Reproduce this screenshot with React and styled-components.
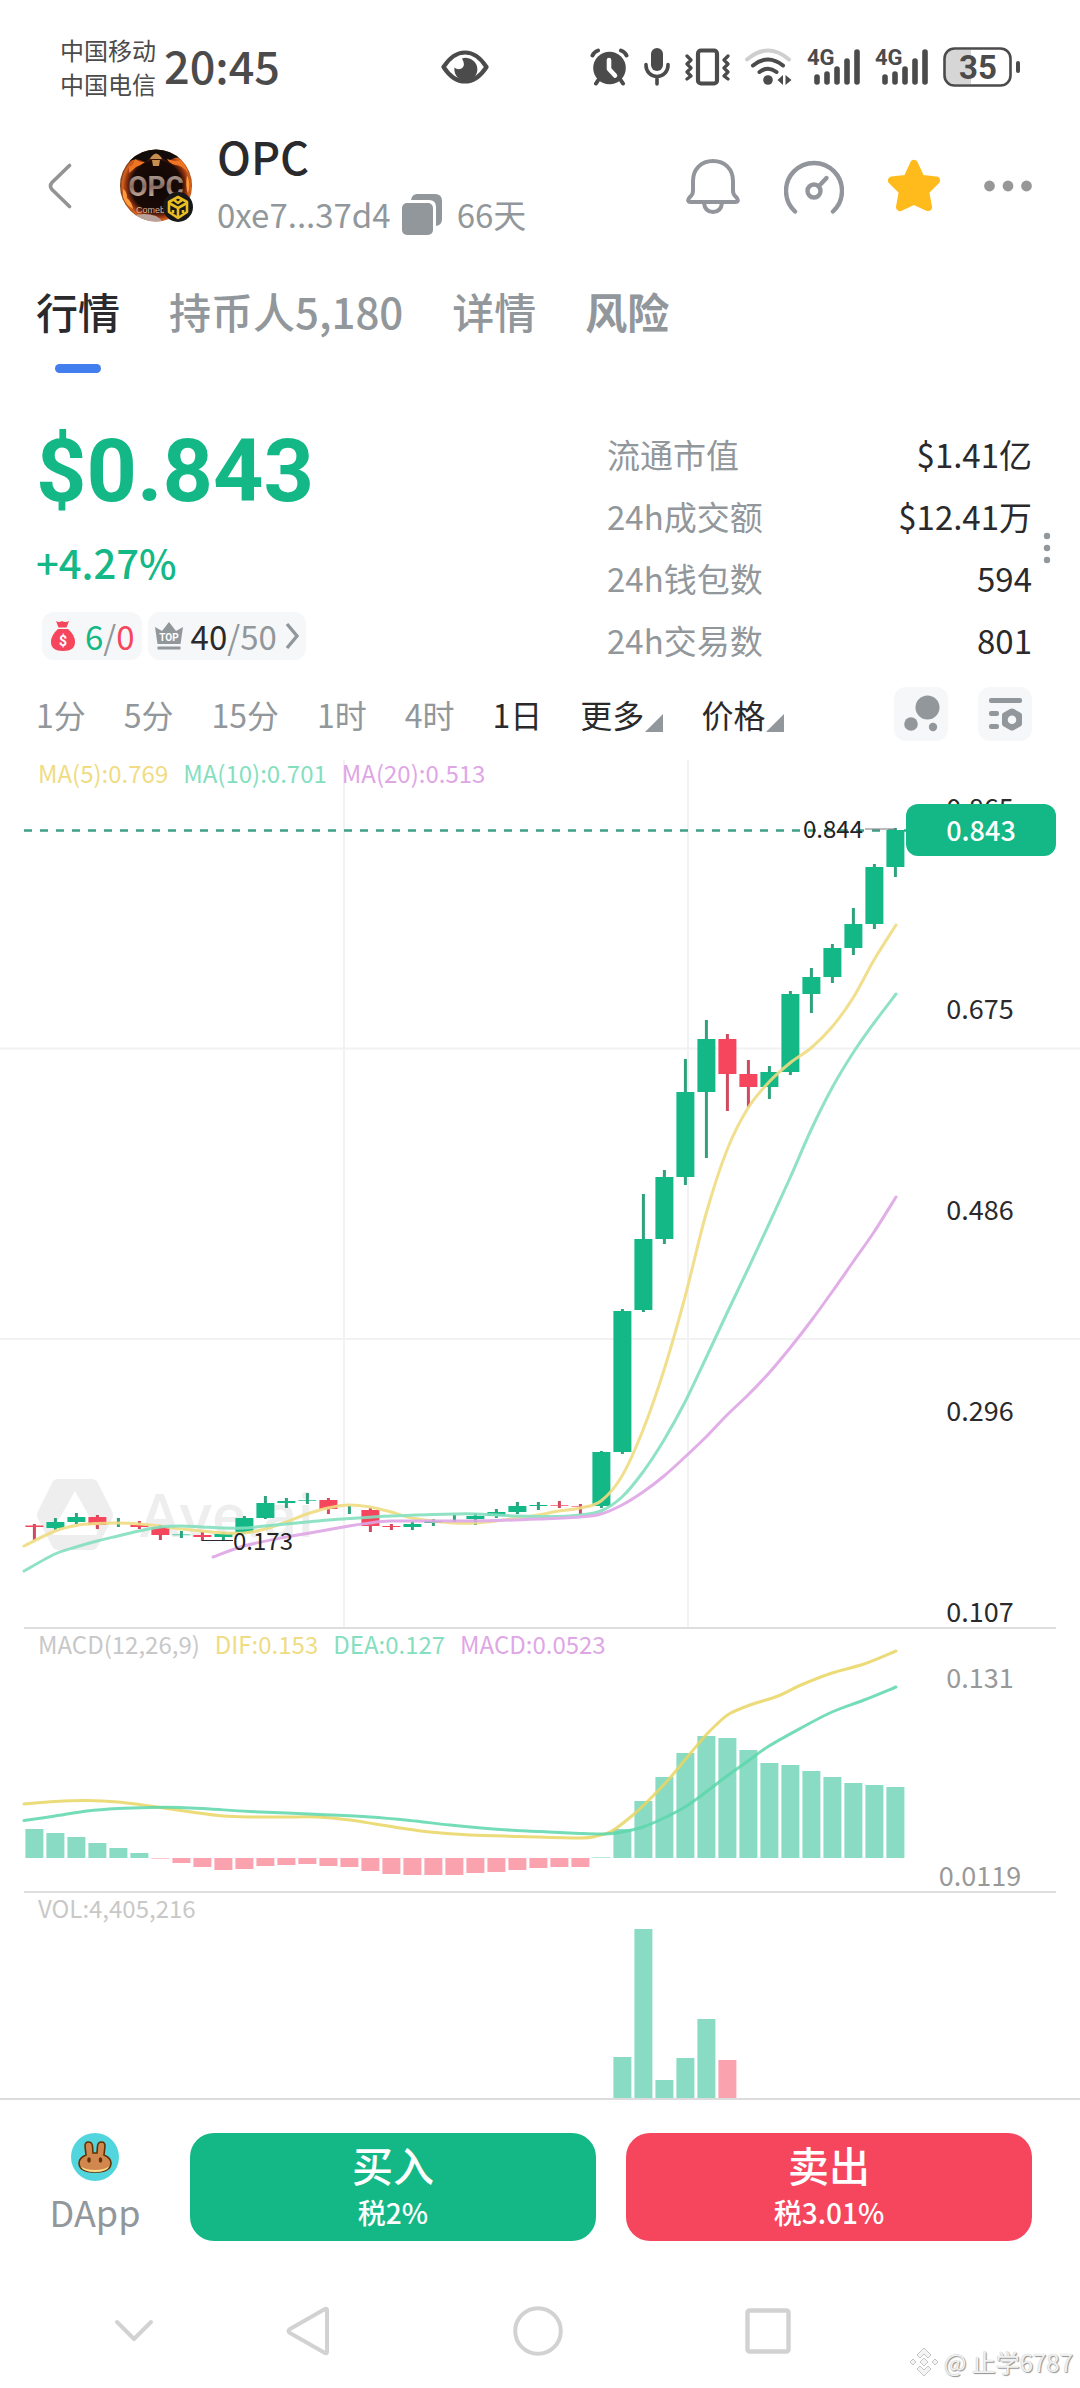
import React, { useState } from 'react'
import styled, { createGlobalStyle } from 'styled-components'

const green = '#13b886'
const red = '#f6465d'
const grey = '#92979b'
const ink = '#2a2a2c'
const yellowLine = '#f0dc82'
const mintLine = '#84dfbf'
const violetLine = '#dfa6e6'

// x of candle i, 42 daily candles
const cx = (i) => 34.4 + i * 21

// [up, bodyTop, bodyBottom, wickTop, wickBottom]
const candles = [
  [0, 1525.5, 1527, 1524, 1540], [1, 1522, 1528, 1518, 1530], [1, 1517, 1522, 1513, 1524],
  [0, 1517, 1525, 1515, 1529], [1, 1522, 1522, 1518, 1527], [0, 1525, 1527, 1521, 1529],
  [0, 1527, 1535, 1525, 1540], [1, 1534.5, 1535.2, 1531, 1538], [0, 1535, 1537, 1532, 1541],
  [1, 1534, 1537, 1532, 1541], [1, 1518, 1533, 1516, 1534], [1, 1503, 1518, 1496, 1519],
  [1, 1501, 1503, 1498, 1508], [1, 1500, 1500.7, 1493, 1504], [0, 1500, 1509, 1498, 1514],
  [1, 1510, 1510, 1506, 1514], [0, 1510, 1526, 1508, 1532], [0, 1526, 1527, 1524, 1530],
  [1, 1524, 1527, 1522, 1530], [1, 1521, 1523, 1519, 1526], [1, 1518, 1518, 1515, 1522],
  [1, 1516, 1519, 1513, 1525], [1, 1512, 1516, 1509, 1518], [1, 1506, 1512, 1502, 1514],
  [1, 1505, 1506, 1502, 1510], [0, 1505, 1505.7, 1501, 1508], [0, 1506, 1506.6, 1504, 1514],
  [1, 1452, 1506, 1451, 1508], [1, 1311, 1452, 1309, 1454], [1, 1239, 1310, 1194, 1312],
  [1, 1177, 1239, 1170, 1244], [1, 1092, 1177, 1059, 1185], [1, 1039, 1092, 1020, 1158],
  [0, 1039, 1074, 1034, 1111], [0, 1074, 1087, 1060, 1107], [1, 1072, 1087, 1066, 1099],
  [1, 994, 1072, 991, 1075], [1, 977, 994, 968, 1013], [1, 948, 977, 944, 983],
  [1, 924, 948, 908, 955], [1, 867, 924, 864, 929], [1, 830, 867, 828, 877],
]

const ma5 = [[24, 1546], [55, 1531], [76, 1525.5], [97, 1523.5], [118, 1523], [139, 1524], [160, 1526], [181, 1529],
  [202, 1531], [223, 1533], [244, 1533], [265, 1529], [286, 1522], [307, 1514], [328, 1508], [349, 1505], [370, 1507],
  [391, 1512], [412, 1518], [433, 1521], [454, 1523], [475, 1523], [496, 1521], [517, 1518], [538, 1515], [559, 1511],
  [580, 1508], [601, 1501], [622, 1476], [643, 1430], [664, 1370], [685, 1297], [706, 1214], [727, 1150], [748, 1108],
  [769, 1082], [790, 1063], [811, 1048], [832, 1027], [853, 998], [874, 960], [896, 925]]
const ma10 = [[24, 1571], [55, 1554], [76, 1547], [97, 1541], [118, 1536], [139, 1531], [160, 1527], [181, 1526],
  [202, 1527], [223, 1528], [244, 1528], [265, 1526], [286, 1524], [307, 1522], [328, 1520], [349, 1518.5],
  [391, 1516], [433, 1514.5], [454, 1514], [475, 1514], [517, 1516], [559, 1516.5], [580, 1515], [601, 1511],
  [622, 1497], [643, 1472], [664, 1440], [685, 1402], [706, 1358], [727, 1313], [748, 1269], [769, 1224], [790, 1178],
  [811, 1130], [832, 1088], [853, 1053], [874, 1023], [896, 994]]
const ma20 = [[213, 1557], [244, 1546], [286, 1537], [307, 1533.5], [349, 1526], [370, 1523], [391, 1521],
  [454, 1521], [496, 1520.5], [538, 1519], [580, 1517], [601, 1514], [622, 1505], [643, 1492], [664, 1476], [685, 1457],
  [706, 1437], [727, 1415], [748, 1395], [769, 1373], [790, 1348], [811, 1321], [832, 1292], [853, 1262], [874, 1232],
  [896, 1197]]
const dif = [[24, 1804], [55, 1801.5], [87, 1800.5], [118, 1802], [150, 1806], [191, 1812], [223, 1816], [254, 1817],
  [286, 1817], [318, 1817], [350, 1820], [375, 1824], [400, 1828], [430, 1832], [470, 1835], [520, 1836.5], [580, 1838],
  [597, 1836], [612, 1831], [633, 1815], [650, 1799], [669, 1779], [689, 1755], [706, 1735], [716, 1725], [729, 1714],
  [750, 1705], [778, 1696], [801, 1685], [832, 1673], [864, 1664], [896, 1651]]
const dea = [[24, 1820.5], [55, 1816], [87, 1811], [118, 1808.5], [150, 1807.5], [180, 1807.5], [210, 1809], [250, 1811.5],
  [320, 1814.5], [370, 1817], [410, 1820.5], [450, 1825], [500, 1829.5], [540, 1831.5], [580, 1833.5], [605, 1834],
  [622, 1832], [643, 1827], [664, 1818], [685, 1807], [706, 1792], [727, 1776], [748, 1761], [769, 1746], [801, 1728],
  [832, 1712], [864, 1700], [896, 1687]]

// far end of every MACD bar, the near end is the zero line
const macdZero = 1858
const macdBars = [1829, 1833, 1837, 1843, 1848, 1853, 1858.6, 1863, 1867, 1870, 1869, 1866, 1865, 1864, 1866, 1867, 1871,
  1874, 1875, 1875, 1875, 1873, 1872, 1870, 1868, 1867, 1867, 1857.4, 1829, 1801, 1777, 1753, 1736, 1738, 1750, 1763, 1765,
  1771, 1777, 1783, 1785, 1787]
const volBars = [[28, 2057, 1], [29, 1929, 1], [30, 2080, 1], [31, 2058, 1], [32, 2019, 1], [33, 2060, 0]]

const smooth = (pts) => {
  let d = `M${pts[0][0]} ${pts[0][1]}`
  for (let i = 0; i < pts.length - 1; i++) {
    const a = pts[i - 1] || pts[i]
    const b = pts[i]
    const c = pts[i + 1]
    const e = pts[i + 2] || c
    d += `C${b[0] + (c[0] - a[0]) / 6} ${b[1] + (c[1] - a[1]) / 6} ${c[0] - (e[0] - b[0]) / 6} ${c[1] - (e[1] - b[1]) / 6} ${c[0]} ${c[1]}`
  }
  return d
}

const stats = [
  ['流通市值', '$1.41亿'],
  ['24h成交额', '$12.41万'],
  ['24h钱包数', '594'],
  ['24h交易数', '801'],
]
const periods = ['1分', '5分', '15分', '1时', '4时', '1日']
const tabs = ['行情', '持币人5,180', '详情', '风险']

const GlobalStyle = createGlobalStyle`
  * { box-sizing: border-box; }
  body {
    margin: 0;
    background: #fff;
    color: ${ink};
    font-family: "Noto Sans CJK SC", "Noto Sans", sans-serif;
  }
  button {
    padding: 0;
    border: 0;
    background: none;
    color: inherit;
    font: inherit;
    cursor: pointer;
  }
  svg { display: block; }
`
const Page = styled.div`
  position: relative;
  overflow: hidden;
`
const StatusBar = styled.div`
  display: flex;
  align-items: center;
  height: 128px;
  padding: 6px 59px 0 60px;
  color: #4b4b4b;
`
const Operators = styled.div`
  font-size: 24px;
  line-height: 34px;
  font-weight: 400;
`
const Clock = styled.div`
  margin: 0 161px 0 8px;
  padding-bottom: 4px;
  font-size: 45px;
  line-height: 60px;
  font-weight: 500;
`
const StatusIcons = styled.div`
  display: flex;
  align-items: center;
  gap: 15px;
  margin-left: auto;
`
const TokenHeader = styled.header`
  display: flex;
  align-items: center;
  padding: 0 48px;
`
const BackButton = styled.button`
  margin-right: 48px;
`
const TokenInfo = styled.div`
  margin-left: 24px;
`
const TokenName = styled.h1`
  margin: 0;
  font-size: 45px;
  line-height: 56px;
  font-weight: 500;
`
const TokenMeta = styled.div`
  display: flex;
  align-items: center;
  font-size: 33px;
  line-height: 60px;
  color: ${grey};
  button { margin: 0 14px 0 11px; }
`
const HeaderActions = styled.div`
  display: flex;
  align-items: center;
  gap: 44px;
  margin-left: auto;
`
const TabBar = styled.nav`
  display: flex;
  gap: 49px;
  padding: 37px 36px 0;
`
const Tab = styled.button`
  display: flex;
  flex-direction: column;
  align-items: center;
  gap: 23px;
  font-size: 42px;
  line-height: 60px;
  font-weight: ${(p) => (p.$bold ? 700 : 500)};
  color: ${(p) => (p.$active ? ink : grey)};
  &::after {
    content: "";
    width: 46px;
    height: 9px;
    border-radius: 5px;
    background: ${(p) => (p.$active ? '#437eee' : 'transparent')};
  }
`
const Summary = styled.section`
  display: flex;
  justify-content: space-between;
  padding: 50px 48px 0 36px;
`
const Price = styled.div`
  font-family: Roboto, sans-serif;
  font-size: 88px;
  line-height: 96px;
  font-weight: 700;
  color: ${green};
`
const Change = styled.div`
  margin-top: 18px;
  font-size: 40px;
  line-height: 50px;
  font-weight: 500;
  color: ${green};
`
const Chips = styled.div`
  display: flex;
  gap: 6px;
  margin: 25px 0 0 6px;
`
const Chip = styled.button`
  display: flex;
  align-items: center;
  gap: 8px;
  height: 48px;
  padding: 0 7px;
  border-radius: 12px;
  background: #f6f7f8;
  font-size: 33px;
  line-height: 48px;
  color: ${grey};
`
const Tone = styled.span`
  color: ${(p) => p.$color};
`
const StatsWrap = styled.div`
  position: relative;
  width: 425px;
`
const Stats = styled.dl`
  margin: 0;
`
const StatRow = styled.div`
  display: flex;
  justify-content: space-between;
  font-size: 33px;
  line-height: 62px;
  dt { color: ${grey}; }
  dd { margin: 0; }
`
const StatsMore = styled.button`
  position: absolute;
  top: 108px;
  right: -20px;
`
const PeriodBar = styled.div`
  display: flex;
  align-items: center;
  gap: 38px;
  padding: 16px 48px 17px 36px;
`
const Period = styled.button`
  font-size: 32px;
  line-height: 54px;
  color: ${(p) => (p.$active ? ink : grey)};
`
const DropButton = styled.button`
  display: flex;
  align-items: flex-end;
  gap: 1px;
  font-size: 32px;
  line-height: 54px;
  svg { margin-bottom: 9px; }
`
const ToolButtons = styled.div`
  display: flex;
  gap: 30px;
  margin-left: auto;
`
const ToolButton = styled.button`
  display: grid;
  place-items: center;
  width: 54px;
  height: 54px;
  border-radius: 12px;
  background: #f6f7f8;
`
const Panel = styled.section`
  position: relative;
  > svg {
    width: 100%;
    height: auto;
  }
`
const Legend = styled.div`
  position: absolute;
  top: 0;
  left: 38px;
  display: flex;
  gap: 15px;
  font-size: 24px;
  line-height: 30px;
`
const BottomBar = styled.footer`
  display: flex;
  gap: 30px;
  padding: 33px 48px 0;
  border-top: 2px solid #dcdcdc;
`
const DappLink = styled.a`
  display: flex;
  flex-direction: column;
  align-items: center;
  gap: 3px;
  width: 94px;
  margin-right: 18px;
  font-size: 36px;
  line-height: 54px;
  color: ${grey};
  text-decoration: none;
`
const TradeButton = styled.button`
  flex: 1;
  height: 108px;
  border-radius: 24px;
  background: ${(p) => p.$color};
  color: #fff;
`
const TradeName = styled.span`
  display: block;
  font-size: 41px;
  line-height: 50px;
  font-weight: 500;
`
const TradeTax = styled.span`
  display: block;
  font-size: 28px;
  line-height: 46px;
  font-weight: 500;
`
const NavBar = styled.nav`
  display: flex;
  align-items: center;
  gap: 94px;
  padding: 65px 94px 32px;
  button {
    display: grid;
    place-items: center;
    width: 80px;
    height: 50px;
  }
`
const NavKeys = styled.div`
  display: flex;
  gap: 150px;
`
const Credit = styled.div`
  position: absolute;
  right: 7px;
  bottom: 8px;
  display: flex;
  align-items: center;
  gap: 5px;
  font-size: 24px;
  line-height: 36px;
  color: #f1f1f1;
  text-shadow: 1px 1px 1px #8f8f8f, 0 0 1px #b0b0b0;
`

const Signal = () => (
  <svg width="53" height="46" viewBox="0 -3 53 46">
    <text x="0" y="18" fontSize="22" fontWeight="700" fontFamily="Roboto, sans-serif" fill="#4b4b4b">4G</text>
    <g stroke="#4b4b4b" strokeWidth="5.6" strokeLinecap="round">
      <path d="M10 30v5M20 27v8M30 22v13M40 14v21M50 5v30" />
    </g>
  </svg>
)

const Triangle = () => (
  <svg width="18" height="18" viewBox="0 0 18 18"><path d="M18 0v18H0z" fill={grey} /></svg>
)

const Avatar = () => (
  <svg width="73" height="74" viewBox="0 0 73 74">
    <defs>
      <radialGradient id="fire" cx=".5" cy=".5" r=".52">
        <stop offset="0" stopColor="#0d0605" />
        <stop offset=".66" stopColor="#1a0a06" />
        <stop offset=".8" stopColor="#8f3210" />
        <stop offset=".9" stopColor="#d8641d" />
        <stop offset="1" stopColor="#2a120a" />
      </radialGradient>
      <linearGradient id="steel" x1="0" y1="0" x2="0" y2="1">
        <stop offset="0" stopColor="#b5a9a2" />
        <stop offset=".5" stopColor="#8a6d61" />
        <stop offset="1" stopColor="#e3cdbd" />
      </linearGradient>
      <clipPath id="round"><circle cx="36" cy="36.5" r="36" /></clipPath>
    </defs>
    <g clipPath="url(#round)">
      <rect width="73" height="74" fill="url(#fire)" />
      <path d="M0 0h73v13Q56 4 48 13L36 5 25 13Q14 6 0 18z" fill="#120c0a" />
      <path d="M9 18q5-3 6-8 4 3 10 3-5 4-9 5-4 4-7 6zM47 10q8 3 14 1 5 5 7 13-6-8-13-8-6-2-8-6z" fill="#ef7423" />
      <path d="M3 40q4 2 4 9 5 4 6 11-8-5-10-12zM67 26q4 8 1 19-3-8-1-19z" fill="#ff9a3d" />
      <path d="M31 8q5-7 10 0l1 2H30zM32 11h8l-1 6h-6z" fill="#c98f4e" />
      <path d="M12 67q12-4 24 0 6 3 8 10H10z" fill="#b9a29c" />
      <text x="36" y="47" textAnchor="middle" fontSize="28" fontWeight="700" fontFamily="Roboto, sans-serif" fill="url(#steel)">OPC</text>
      <text x="16" y="64" fontSize="9" fontFamily="Liberation Sans, sans-serif" fill="#d9b49a">Comeb</text>
    </g>
    <circle cx="58" cy="58" r="15" fill="#17171a" />
    <g fill="none" stroke="#e8bd22" strokeWidth="2.6" strokeLinejoin="round">
      <path d="M58 48l9 5v10l-9 6-9-6V53z" />
      <path d="M49 54l9 5 9-5M58 59v9M54 51l4 3 4-3" />
      <path d="M53 61v3M63 61v3" />
    </g>
  </svg>
)

const PricePanel = () => (
  <Panel>
    <svg viewBox="0 758 1080 871" role="img" aria-label="K线">
      <path d="M344 760V1627M688 760V1627M0 1048.5H1080M0 1339H1080" stroke="#f2f2f2" strokeWidth="2" />
      <path d="M24 1628H1056" stroke="#dedede" strokeWidth="2" />
      <g fill="#eeeeee">
        <path fillRule="evenodd" d="M58 1479h34q4 0 6 4l14 28q2 4 0 8l-14 27q-2 4-6 4H58q-4 0-6-4l-14-27q-2-4 0-8l14-28q2-4 6-4zM75 1491l-22 39q-2 5 3 5h38q5 0 3-5z" />
        <text x="140" y="1537" fontSize="60" fontWeight="600" fontFamily="Open Sans, sans-serif">Ave.ai</text>
      </g>
      <path d="M24 830.5H906" stroke="#3f9f85" strokeWidth="2.4" strokeDasharray="8 8" />
      {candles.map(([up, top, bottom, high, low], i) => (
        <g key={i}>
          <path d={`M${cx(i)} ${high}V${low}`} stroke={up ? '#2fa17c' : '#d0495f'} strokeWidth="3" />
          <rect x={cx(i) - 9} y={top} width="18" height={bottom - top} fill={up ? green : red} />
        </g>
      ))}
      <g fill="none" strokeWidth="3" strokeLinecap="round" opacity=".9">
        <path d={smooth(ma5)} stroke={yellowLine} />
        <path d={smooth(ma10)} stroke={mintLine} />
        <path d={smooth(ma20)} stroke={violetLine} />
      </g>
      <path d="M202 1540.5H233" stroke={ink} strokeWidth="1" />
      <path d="M865 829H896" stroke="#777" strokeWidth="1" />
      <g fontSize="24" fill="#222">
        <text x="233" y="1550">0.173</text>
        <text x="803" y="838">0.844</text>
      </g>
      <g fontSize="27" textAnchor="middle" fill="#2a2a2c">
        <text x="980" y="818">0.865</text>
        <text x="980" y="1019">0.675</text>
        <text x="980" y="1220">0.486</text>
        <text x="980" y="1421">0.296</text>
        <text x="980" y="1622">0.107</text>
      </g>
      <rect x="906" y="804" width="150" height="52" rx="12" fill={green} />
      <text x="981" y="841" fontSize="27" fontWeight="500" textAnchor="middle" fill="#fff">0.843</text>
    </svg>
    <Legend>
      <Tone $color={yellowLine}>MA(5):0.769</Tone>
      <Tone $color={mintLine}>MA(10):0.701</Tone>
      <Tone $color={violetLine}>MA(20):0.513</Tone>
    </Legend>
  </Panel>
)

const MacdPanel = () => (
  <Panel>
    <svg viewBox="0 1629 1080 264" role="img" aria-label="MACD">
      {macdBars.map((y, i) => (
        <rect key={i} x={cx(i) - 9} y={Math.min(y, macdZero)} width="18" height={Math.abs(y - macdZero)} fill={y < macdZero ? '#8adbc4' : '#faa3ae'} />
      ))}
      <g fill="none" strokeWidth="3" strokeLinecap="round">
        <path d={smooth(dif)} stroke="#e9d562" opacity=".85" />
        <path d={smooth(dea)} stroke="#5cd7ab" opacity=".85" />
      </g>
      <g fontSize="27" textAnchor="middle" fill="#999">
        <text x="980" y="1688">0.131</text>
        <text x="980" y="1886">0.0119</text>
      </g>
      <path d="M24 1892H1056" stroke="#dedede" strokeWidth="2" />
    </svg>
    <Legend>
      <Tone $color="#c8c8c8">MACD(12,26,9)</Tone>
      <Tone $color={yellowLine}>DIF:0.153</Tone>
      <Tone $color={mintLine}>DEA:0.127</Tone>
      <Tone $color={violetLine}>MACD:0.0523</Tone>
    </Legend>
  </Panel>
)

const VolumePanel = () => (
  <Panel>
    <svg viewBox="0 1893 1080 205" role="img" aria-label="VOL">
      {volBars.map(([i, y, up]) => (
        <rect key={i} x={cx(i) - 9} y={y} width="18" height={2098 - y} fill={up ? '#8adbc4' : '#faa3ae'} />
      ))}
    </svg>
    <Legend>
      <Tone $color="#c8c8c8">VOL:4,405,216</Tone>
    </Legend>
  </Panel>
)

const App = () => {
  const [tab, setTab] = useState('行情')
  const [period, setPeriod] = useState('1日')

  return (
    <Page>
      <GlobalStyle />
      <StatusBar>
        <Operators>
          <div>中国移动</div>
          <div>中国电信</div>
        </Operators>
        <Clock>20:45</Clock>
        <svg width="48" height="34" viewBox="0 0 48 34">
          <path d="M2.5 17Q12 2.500 24 2.500T45.500 17Q36 31.500 24 31.500T2.500 17z" fill="none" stroke="#4b4b4b" strokeWidth="4.2" strokeLinejoin="round" />
          <path d="M21 8.500a11.500 11.500 0 1 1-7.500 9q3 3 7 1 4.500-3 .5-10z" fill="#4b4b4b" />
        </svg>
        <StatusIcons>
          <svg width="39" height="38" viewBox="0 0 39 38">
            <g stroke="#4b4b4b" strokeWidth="4" strokeLinecap="round" fill="none">
              <path d="M2.500 7.500Q4 4 8 2.500M36.500 7.500Q35 4 31 2.500M9 31l-3 4.500M30 31l3 4.500" />
            </g>
            <circle cx="19.500" cy="20" r="16.300" fill="#4b4b4b" />
            <path d="M19 12v9l6 6.500" fill="none" stroke="#fff" strokeWidth="4.600" strokeLinecap="round" strokeLinejoin="round" />
          </svg>
          <svg width="26" height="38" viewBox="0 0 26 38">
            <rect x="7" y="0" width="12" height="23" rx="6" fill="#4b4b4b" />
            <path d="M2 16.500v1a11 11 0 0 0 22 0v-1M13 29v7" fill="none" stroke="#4b4b4b" strokeWidth="3.600" strokeLinecap="round" />
          </svg>
          <svg width="45" height="38" viewBox="0 0 45 38">
            <rect x="13" y="2.500" width="19" height="33" rx="3" fill="none" stroke="#4b4b4b" strokeWidth="4.200" />
            <path d="M2 8l4 4-4 4 4 4-4 4 4 4-4 3M43 8l-4 4 4 4-4 4 4 4-4 4 4 3" fill="none" stroke="#4b4b4b" strokeWidth="3.200" strokeLinecap="round" strokeLinejoin="round" />
          </svg>
          <svg width="47" height="38" viewBox="0 0 47 38">
            <g fill="none" strokeLinecap="round" strokeWidth="4">
              <path d="M2 11.500q21-18 42 0" stroke="#cfcfcf" />
              <path d="M8 17.500q15-12 30 0M14.500 24q8.500-6.500 17 0" stroke="#4b4b4b" />
            </g>
            <circle cx="23" cy="32" r="4.800" fill="#4b4b4b" />
            <path d="M38 27v10l-5.500-5zM40.500 27v10l6-5z" fill="#4b4b4b" />
          </svg>
          <Signal />
          <Signal />
          <svg width="78" height="40" viewBox="0 0 78 40">
            <path d="M12 3h16v34H12q-10 0-10-9V12q0-9 10-9z" fill="#d6d6d6" />
            <rect x="1.500" y="1.500" width="66" height="37" rx="10" fill="none" stroke="#4b4b4b" strokeWidth="2.600" />
            <rect x="73" y="14" width="4" height="12" rx="2" fill="#4b4b4b" />
            <text x="35" y="31.500" textAnchor="middle" fontSize="33" fontWeight="700" fontFamily="Roboto, sans-serif" fill="#4b4b4b">35</text>
          </svg>
        </StatusIcons>
      </StatusBar>

      <TokenHeader>
        <BackButton aria-label="返回">
          <svg width="24" height="46" viewBox="0 0 24 46">
            <path d="M21.500 2.500L4 19.500q-3 3.500 0 7L21.500 43.500" fill="none" stroke="#939393" strokeWidth="3.600" strokeLinecap="round" />
          </svg>
        </BackButton>
        <Avatar />
        <TokenInfo>
          <TokenName>OPC</TokenName>
          <TokenMeta>
            <span>0xe7...37d4</span>
            <button aria-label="复制">
              <svg width="41" height="41" viewBox="0 0 41 41">
                <rect x="0" y="9" width="31" height="32" rx="5" fill={grey} />
                <path d="M9 6q1-6 6-6h18q7 0 7 7v18q0 6-6 7V13q0-7-7-7z" fill={grey} />
              </svg>
            </button>
            <span>66天</span>
          </TokenMeta>
        </TokenInfo>
        <HeaderActions>
          <button aria-label="提醒">
            <svg width="54" height="56" viewBox="0 0 54 56" fill="none" stroke="#92959b" strokeWidth="4" strokeLinejoin="round">
              <path d="M27 3c-12 0-20 8.500-20 20v9c0 4-1 5-3.500 7.500-2.500 3-1 4.500 1 4.500h45c2 0 3.500-1.500 1-4.500C48 37 47 36 47 32v-9C47 11.500 39 3 27 3z" />
              <path d="M18 45q1 9 9 9t9-9" />
            </svg>
          </button>
          <button aria-label="速度">
            <svg width="60" height="56" viewBox="0 0 60 56" fill="none" stroke="#92959b" strokeWidth="4.400" strokeLinecap="round">
              <path d="M11 53.500a28 28 0 1 1 38 0" />
              <circle cx="30" cy="33" r="6.500" />
              <path d="M35 28l7.500-8" />
            </svg>
          </button>
          <button aria-label="收藏">
            <svg width="52" height="56" viewBox="0 0 52 56">
              <path d="M26 6l6 13q1 2 3 2l13 1.500-9.500 9.500q-1.500 1.500-1 3.500L40 49l-12-5.500q-2-1-4 0L12 49l2.500-13.500q.5-2-1-3.500L4 22.500 17 21q2 0 3-2z" fill="#ffbb1c" stroke="#ffbb1c" strokeWidth="8" strokeLinejoin="round" />
            </svg>
          </button>
          <button aria-label="更多">
            <svg width="48" height="12" viewBox="0 0 48 12" fill="#979797">
              <circle cx="5.500" cy="6" r="5.400" />
              <circle cx="24" cy="6" r="5.400" />
              <circle cx="42.500" cy="6" r="5.400" />
            </svg>
          </button>
        </HeaderActions>
      </TokenHeader>

      <TabBar>
        {tabs.map((name) => (
          <Tab key={name} $active={tab === name} $bold={name === '风险'} onClick={() => setTab(name)}>{name}</Tab>
        ))}
      </TabBar>

      <Summary>
        <div>
          <Price>$0.843</Price>
          <Change>+4.27%</Change>
          <Chips>
            <Chip>
              <svg width="28" height="32" viewBox="0 0 28 32">
                <path d="M7 1q3 2 6 0 3 2 7 0l-2.500 6.500h-8z" fill={red} />
                <path d="M9 9h10q7 6 7 13 0 9-12 9T2 22Q2 15 9 9z" fill={red} />
                <text x="14" y="26" textAnchor="middle" fontSize="14" fontWeight="700" fontFamily="Roboto, sans-serif" fill="#fff">$</text>
              </svg>
              <span><Tone $color={green}>6</Tone>/<Tone $color={red}>0</Tone></span>
            </Chip>
            <Chip>
              <svg width="28" height="30" viewBox="0 0 28 30">
                <path d="M0 6l7 4 7-9 7 9 7-4-2.500 17h-23z" fill={grey} />
                <path d="M2.500 25.500h23v3h-23z" fill={grey} />
                <text x="14" y="20" textAnchor="middle" fontSize="10" fontWeight="700" fontFamily="Roboto, sans-serif" fill="#fff">TOP</text>
              </svg>
              <span><Tone $color={ink}>40</Tone>/50</span>
              <svg width="14" height="28" viewBox="0 0 14 28">
                <path d="M2 2l10 12L2 26" fill="none" stroke={grey} strokeWidth="3.400" />
              </svg>
            </Chip>
          </Chips>
        </div>
        <StatsWrap>
          <Stats>
            {stats.map(([label, value]) => (
              <StatRow key={label}>
                <dt>{label}</dt>
                <dd>{value}</dd>
              </StatRow>
            ))}
          </Stats>
          <StatsMore aria-label="更多数据">
            <svg width="10" height="34" viewBox="0 0 10 34" fill="#92979b">
              <circle cx="5" cy="5" r="3.200" />
              <circle cx="5" cy="17" r="3.200" />
              <circle cx="5" cy="29" r="3.200" />
            </svg>
          </StatsMore>
        </StatsWrap>
      </Summary>

      <PeriodBar>
        {periods.map((name) => (
          <Period key={name} $active={period === name} onClick={() => setPeriod(name)}>{name}</Period>
        ))}
        <DropButton>更多<Triangle /></DropButton>
        <DropButton>价格<Triangle /></DropButton>
        <ToolButtons>
          <ToolButton aria-label="气泡图">
            <svg width="54" height="54" viewBox="0 0 54 54" fill={grey}>
              <circle cx="33.500" cy="20.500" r="12" />
              <circle cx="17" cy="37" r="6.800" />
              <circle cx="39" cy="40" r="4.200" />
            </svg>
          </ToolButton>
          <ToolButton aria-label="指标设置">
            <svg width="54" height="54" viewBox="0 0 54 54" fill={grey}>
              <rect x="11" y="11" width="33" height="5" rx="2" />
              <rect x="11" y="24" width="10" height="5" rx="2" />
              <rect x="11" y="37" width="10" height="5" rx="2" />
              <path fillRule="evenodd" d="M34 21.500q1 0 2 .6l7 4q1 .8 1 2v9q0 1.200-1 2l-7 4q-2 1-4 0l-7-4q-1-.8-1-2v-9q0-1.200 1-2l7-4q1-.6 2-.6zM34 28.500a4.300 4.300 0 1 0 0 8.600 4.300 4.300 0 0 0 0-8.600z" />
            </svg>
          </ToolButton>
        </ToolButtons>
      </PeriodBar>

      <PricePanel />
      <MacdPanel />
      <VolumePanel />

      <BottomBar>
        <DappLink href="#dapp">
          <svg width="48" height="48" viewBox="0 0 48 48">
            <circle cx="24" cy="24" r="24" fill="#53d5de" />
            <path d="M15 22l-1-9q0-4 3.500-4t4 4l.5 7h4l.5-7q.5-4 4-4t3.500 4l-1 9q7 3 7 8 0 9-16 9T8 30q0-5 7-8z" fill="#d1884f" stroke="#633001" strokeWidth="1.600" />
            <path d="M9.500 33Q14 37 24 37t14.500-4Q36 39 24 39T9.500 33z" fill="#fedc90" />
            <ellipse cx="18" cy="27" rx="1.800" ry="2.800" fill="#633001" />
            <ellipse cx="29.500" cy="27" rx="1.800" ry="2.800" fill="#633001" />
          </svg>
          DApp
        </DappLink>
        <TradeButton $color={green}>
          <TradeName>买入</TradeName>
          <TradeTax>税2%</TradeTax>
        </TradeButton>
        <TradeButton $color={red}>
          <TradeName>卖出</TradeName>
          <TradeTax>税3.01%</TradeTax>
        </TradeButton>
      </BottomBar>

      <NavBar>
        <button aria-label="收起">
          <svg width="40" height="24" viewBox="0 0 40 24"><path d="M3 3l17 17L37 3" fill="none" stroke="#d2d2d2" strokeWidth="4" strokeLinecap="round" strokeLinejoin="round" /></svg>
        </button>
        <NavKeys>
          <button aria-label="后退">
            <svg width="44" height="50" viewBox="0 0 44 50"><path d="M41 4v42q0 2-2 1L4 27q-3-2 0-4L39 3q2-1 2 1z" fill="none" stroke="#d2d2d2" strokeWidth="4" strokeLinejoin="round" /></svg>
          </button>
          <button aria-label="主页">
            <svg width="50" height="50" viewBox="0 0 50 50"><circle cx="25" cy="25" r="22.800" fill="none" stroke="#d2d2d2" strokeWidth="4" /></svg>
          </button>
          <button aria-label="最近任务">
            <svg width="46" height="46" viewBox="0 0 46 46"><rect x="2.500" y="2.500" width="41" height="41" rx="2" fill="none" stroke="#d2d2d2" strokeWidth="4.400" /></svg>
          </button>
        </NavKeys>
      </NavBar>

      <Credit>
        <svg width="30" height="30" viewBox="0 0 30 30" fill="#f4f4f4" stroke="#c4c4c4" strokeWidth="1">
          <path d="M15 1l7 7-3 3-4-4-4 4-3-3zM4 12l3 3-3 3-3-3zM26 12l3 3-3 3-3-3zM15 11l4 4-4 4-4-4zM8 22l3-3 4 4 4-4 3 3-7 7z" />
        </svg>
        <span>@ 止学6787</span>
      </Credit>
    </Page>
  )
}

export default App
